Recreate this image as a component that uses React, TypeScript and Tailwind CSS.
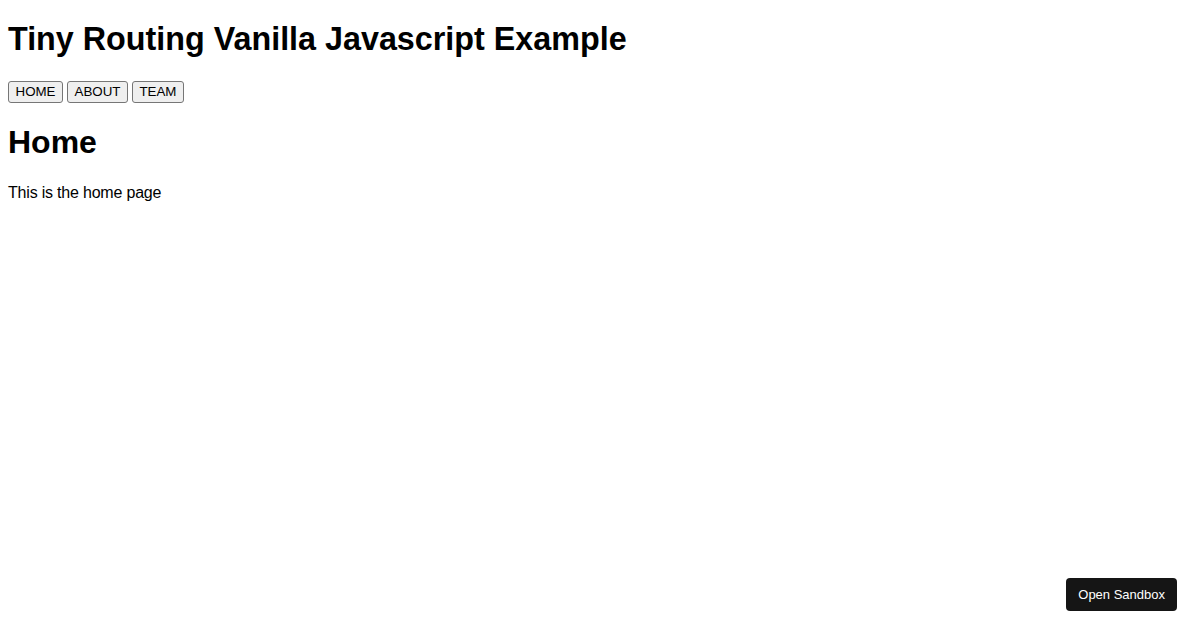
export default function App() {
  const pages = ['HOME', 'ABOUT', 'TEAM'];

  return (
    <div className="min-h-screen bg-white px-2 pt-px font-['Liberation_Sans',Arial,sans-serif] text-black">
      <h1 className="mt-[20px] text-[32.3px] font-bold leading-[37px]">Tiny Routing Vanilla Javascript Example</h1>

      <nav className="mt-[23px] flex gap-[4px]">
        {pages.map((p) => (
          <button
            key={p}
            className="h-[22px] rounded-[3px] border border-[#767676] bg-[#efefef] px-[6.5px] text-[13.33px] leading-[20px] text-black"
          >
            {p}
          </button>
        ))}
      </nav>

      <div>
        <h1 className="mt-[21px] text-[32px] font-bold leading-[37px]">Home</h1>
        <p className="mt-[23px] text-[16px] leading-[18px] tracking-[-0.2px]">This is the home page</p>
      </div>

      <button className="fixed bottom-[19px] right-[23px] flex h-[33px] items-center rounded-[4px] bg-[#151515] px-3 text-[13px] text-white">
        Open Sandbox
      </button>
    </div>
  );
}
